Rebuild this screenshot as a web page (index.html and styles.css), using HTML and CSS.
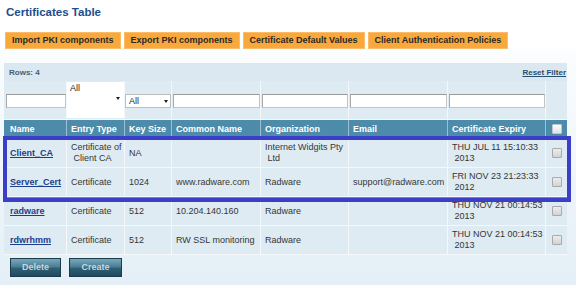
FILE: index.html
```html
<!DOCTYPE html>
<html>
<head>
<meta charset="utf-8">
<title>Certificates Table</title>
<link rel="stylesheet" href="styles.css">
</head>
<body>
<div class="page">
  <h1 class="title">Certificates Table</h1>
  <div class="actions">
    <button class="tab-btn">Import PKI components</button>
    <button class="tab-btn">Export PKI components</button>
    <button class="tab-btn">Certificate Default Values</button>
    <button class="tab-btn">Client Authentication Policies</button>
  </div>
  <div class="content">
    <div class="panel">
      <div class="rows-bar">
        <span class="rows-count">Rows: 4</span>
        <a class="reset" href="#">Reset Filter</a>
      </div>
      <table class="grid">
        <colgroup>
          <col class="c-name">
          <col class="c-type">
          <col class="c-key">
          <col class="c-cn">
          <col class="c-org">
          <col class="c-mail">
          <col class="c-exp">
          <col class="c-chk">
        </colgroup>
        <tr class="filter-row">
          <td class="f-name"><input class="txt" type="text"></td>
          <td class="f-list"><div class="listbox"><span class="opt">All</span><i class="arrow arrow-lb"></i></div></td>
          <td class="f-drop"><div class="dropdown"><span class="opt">All</span><i class="arrow"></i></div></td>
          <td><input class="txt" type="text"></td>
          <td><input class="txt" type="text"></td>
          <td><input class="txt" type="text"></td>
          <td><input class="txt" type="text"></td>
          <td></td>
        </tr>
        <tr class="head-row">
          <th class="first">Name</th>
          <th>Entry Type</th>
          <th>Key Size</th>
          <th>Common Name</th>
          <th>Organization</th>
          <th>Email</th>
          <th>Certificate Expiry</th>
          <th class="chk"><span class="cb cb-head"></span></th>
        </tr>
        <tr>
          <td class="first"><a class="link" href="#">Client_CA</a></td>
          <td>Certificate of<br>&nbsp;Client CA</td>
          <td>NA</td>
          <td></td>
          <td>Internet Widgits Pty<br>&nbsp;Ltd</td>
          <td></td>
          <td>THU JUL 11 15:10:33<br>&nbsp;2013</td>
          <td class="chk"><span class="cb"></span></td>
        </tr>
        <tr>
          <td class="first"><a class="link" href="#">Server_Cert</a></td>
          <td>Certificate</td>
          <td>1024</td>
          <td>www.radware.com</td>
          <td>Radware</td>
          <td>support@radware.com</td>
          <td>FRI NOV 23 21:23:33<br>&nbsp;2012</td>
          <td class="chk"><span class="cb"></span></td>
        </tr>
        <tr>
          <td class="first"><a class="link" href="#">radware</a></td>
          <td>Certificate</td>
          <td>512</td>
          <td>10.204.140.160</td>
          <td>Radware</td>
          <td></td>
          <td>THU NOV 21 00:14:53<br>&nbsp;2013</td>
          <td class="chk"><span class="cb"></span></td>
        </tr>
        <tr>
          <td class="first"><a class="link" href="#">rdwrhmm</a></td>
          <td>Certificate</td>
          <td>512</td>
          <td>RW SSL monitoring</td>
          <td>Radware</td>
          <td></td>
          <td>THU NOV 21 00:14:53<br>&nbsp;2013</td>
          <td class="chk"><span class="cb"></span></td>
        </tr>
      </table>
      <div class="footer">
        <button class="dark-btn btn-del">Delete</button>
        <button class="dark-btn btn-create">Create</button>
      </div>
    </div>
  </div>
  <div class="highlight"></div>
</div>
</body>
</html>
```

FILE: styles.css
```css
* { box-sizing: border-box; }

html, body {
  margin: 0;
  padding: 0;
  background: #ffffff;
}

body {
  font-family: "Liberation Sans", Arial, Helvetica, sans-serif;
  color: #333333;
}

.page {
  position: relative;
  width: 578px;
  height: 291px;
  overflow: hidden;
}

.title {
  margin: 0;
  padding: 5px 0 0 6px;
  font-size: 11.5px;
  line-height: 14px;
  font-weight: bold;
  color: #1c4d8d;
}

.actions {
  display: flex;
  gap: 3px;
  margin: 13px 0 0 5px;
}

.tab-btn {
  font-family: "Liberation Sans", Arial, sans-serif;
  font-size: 9px;
  font-weight: bold;
  line-height: 15px;
  height: 17px;
  color: #2a2a2a;
  background: #f9a83b;
  border: 1px solid #fbbb68;
  padding: 0 6px;
  margin: 0;
}

.content {
  width: 576px;
  height: 236px;
  padding: 14px 0 0 4px;
  background: linear-gradient(#fbfdfe, #e4eff7);
}

.panel {
  width: 563px;
}

.rows-bar {
  height: 18px;
  background: #dbe8f1;
  display: flex;
  justify-content: space-between;
  align-items: center;
  padding: 0 1px 0 5px;
  font-size: 8px;
  font-weight: bold;
}

.rows-count { color: #485e6f; }

.reset {
  color: #25506f;
  text-decoration: underline;
}

.grid {
  width: 563px;
  table-layout: fixed;
  border-collapse: separate;
  border-spacing: 0;
  font-size: 9px;
  line-height: 11px;
}

.c-name { width: 63px; }
.c-type { width: 58px; }
.c-key { width: 47px; }
.c-cn { width: 89px; }
.c-org { width: 88px; }
.c-mail { width: 99px; }
.c-exp { width: 98px; }
.c-chk { width: 21px; }

.grid td,
.grid th {
  border-right: 1px solid #f4f8fb;
  border-bottom: 1px solid #f4f8fb;
  padding: 3px 2px 3px 4px;
  background: #deebf3;
  vertical-align: middle;
  text-align: left;
  overflow: hidden;
  white-space: nowrap;
  color: #363636;
}

.grid tr > :last-child { border-right: 0; }

.grid .first { padding-left: 6px; }

/* filter row */
.filter-row td {
  vertical-align: top;
  padding: 13px 0 11px 1px;
}

.filter-row .f-name { padding-left: 2px; }
.filter-row .f-list { padding: 1px 0 1px 0; }
.filter-row .f-drop { padding-left: 0; }

.txt {
  display: block;
  width: 100%;
  height: 14px;
  margin: 0;
  padding: 0;
  background: #ffffff;
  border: 1px solid #c4c4c4;
  border-top-color: #9a9a9a;
  border-left-color: #aaaaaa;
}

.listbox {
  height: 36px;
  background: #ffffff;
  display: flex;
  justify-content: space-between;
  padding: 1px 3px 0 3px;
}

.opt {
  color: #1e1e1e;
  font-weight: normal;
}

.listbox .opt { align-self: flex-start; }

.arrow {
  display: block;
  width: 0;
  height: 0;
  border-left: 2.5px solid transparent;
  border-right: 2.5px solid transparent;
  border-top: 3px solid #1e1e1e;
}

.arrow-lb {
  align-self: center;
  margin: 0 1px 4px 0;
}

.dropdown {
  height: 14px;
  background: #ffffff;
  border: 1px solid #bdbdbd;
  display: flex;
  align-items: center;
  justify-content: space-between;
  padding: 0 2px 0 3px;
}

/* header row */
.head-row th {
  background: #4d8bab;
  color: #ffffff;
  font-weight: bold;
  padding-top: 4px;
  padding-bottom: 3px;
  border-right-color: rgba(255, 255, 255, 0.45);
  border-bottom-color: #f4f8fb;
}

.grid .chk {
  text-align: center;
  padding: 0 0 0 1px;
}

.cb {
  display: inline-block;
  width: 10px;
  height: 10px;
  vertical-align: middle;
  border: 1px solid #a9a9a9;
  border-radius: 1px;
  background: linear-gradient(#ececec, #d3d3d3);
}

.cb-head {
  background: linear-gradient(#fbfbfb, #e3e3e3);
  border-color: #b9c9d2;
}

.link {
  color: #1b3f8c;
  font-weight: bold;
  text-decoration: underline;
}

/* footer */
.footer {
  display: flex;
  gap: 8px;
  padding: 3px 0 0 6px;
}

.dark-btn {
  height: 19px;
  margin: 0;
  padding: 0;
  font-family: "Liberation Sans", Arial, sans-serif;
  font-size: 9px;
  font-weight: bold;
  line-height: 17px;
  color: #c6d5df;
  text-align: center;
  border: 1px solid #1a3c4c;
  background: linear-gradient(#78a7ba, #4c7f95 45%, #2f5f74 55%, #1f4a5d);
}

.btn-del { width: 51px; }
.btn-create { width: 53px; }

/* annotation overlay */
.highlight {
  position: absolute;
  left: 3px;
  top: 136px;
  width: 568px;
  height: 66px;
  border: 4px solid #3b3ec6;
  box-shadow: inset 0 -1px 0 #c46a78;
  pointer-events: none;
}
```
